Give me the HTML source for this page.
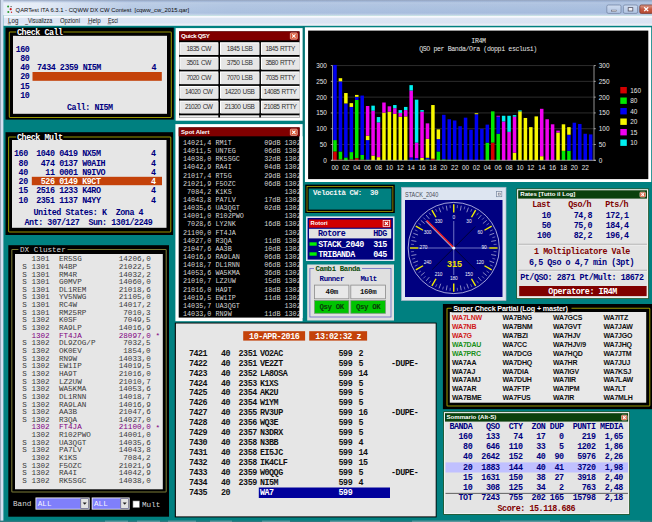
<!DOCTYPE html>
<html><head><meta charset="utf-8"><title>QARTest ITA 6.3.1 - CQWW DX CW Contest</title>
<style>
html,body{margin:0;padding:0;}
body{width:652px;height:522px;overflow:hidden;background:#008080;position:relative;font-family:"Liberation Sans",sans-serif;}
#app{position:absolute;left:0;top:0;width:652px;height:522px;overflow:hidden;background:#008080;}
#app div{position:absolute;white-space:pre;}
#app svg{position:absolute;left:0;top:0;}
.tb,.tw,.tk,.tr{font:bold 8.4px/10px "Liberation Mono",monospace;letter-spacing:-0.46px;}
.tb{color:#000080;}.tw{color:#fff;}.tk{color:#101010;}.tr{color:#800000;}
.dx{font:7.63px/10px "Liberation Mono",monospace;color:#3a3a3a;}
.dxp{font:7.63px/10px "Liberation Mono",monospace;color:#800080;}
.sp{font:6.78px/10px "Liberation Mono",monospace;color:#d6d6d6;}
.t8{font:bold 7.4px/10px "Liberation Mono",monospace;letter-spacing:-0.37px;}
.sb{font:bold 6.1px/10px "Liberation Sans",sans-serif;color:#fff;}
.qb{font:6.5px/10px "Liberation Sans",sans-serif;color:#303030;letter-spacing:-0.5px;word-spacing:0.9px;}
.ch{font:6.6px/10px "Liberation Mono",monospace;color:#e8e8e8;letter-spacing:-0.39px;}
.cn{font:6.42px/10px "Liberation Sans",sans-serif;color:#e8e8e8;}
.scp{font:bold 7px/10px "Liberation Sans",sans-serif;color:#101010;letter-spacing:-0.2px;}
.mn{font:6.4px/10px "Liberation Sans",sans-serif;color:#202020;}

</style></head><body><div id="app">
<svg width="652" height="522" viewBox="0 0 652 522">
<defs><linearGradient id="gt" x1="0" y1="0" x2="1" y2="0"><stop offset="0" stop-color="#e9eff9"/><stop offset="0.06" stop-color="#e2eaf6"/><stop offset="0.12" stop-color="#cbd9ee"/><stop offset="0.2" stop-color="#b3c7e3"/><stop offset="0.35" stop-color="#aac0df"/><stop offset="1" stop-color="#a3badc"/></linearGradient><linearGradient id="gr" x1="0" y1="0" x2="0" y2="1"><stop offset="0" stop-color="#8f9db6" stop-opacity="0.9"/><stop offset="0.1" stop-color="#9fb2d2" stop-opacity="0.5"/><stop offset="0.25" stop-color="#fff" stop-opacity="0.12"/><stop offset="0.85" stop-color="#fff" stop-opacity="0"/><stop offset="1" stop-color="#fff" stop-opacity="0.35"/></linearGradient><linearGradient id="gm" x1="0" y1="0" x2="0" y2="1"><stop offset="0" stop-color="#fcfdfe"/><stop offset="0.2" stop-color="#f2f5fb"/><stop offset="0.3" stop-color="#dde5f3"/><stop offset="0.74" stop-color="#dae3f2"/><stop offset="0.82" stop-color="#e8ecf5"/><stop offset="1" stop-color="#eceff6"/></linearGradient><linearGradient id="gb" x1="0" y1="0" x2="0" y2="1"><stop offset="0" stop-color="#cfdcf0"/><stop offset="1" stop-color="#aec2e0"/></linearGradient><linearGradient id="gc" x1="0" y1="0" x2="0" y2="1"><stop offset="0" stop-color="#dda090"/><stop offset="0.5" stop-color="#c65a42"/><stop offset="1" stop-color="#b84a32"/></linearGradient></defs>
<rect x="0.00" y="0.00" width="652.00" height="15.30" fill="url(#gt)" />
<rect x="0.00" y="0.00" width="652.00" height="15.30" fill="url(#gr)" />
<rect x="3.40" y="15.30" width="648.60" height="10.50" fill="url(#gm)" />
<rect x="0.00" y="0.00" width="3.40" height="522.00" fill="#d3deef" />
<rect x="0.00" y="0.00" width="0.80" height="522.00" fill="#8c98ac" />
<rect x="0.00" y="520.60" width="652.00" height="1.40" fill="#2f7a80" />
<rect x="105.00" y="520.60" width="23.00" height="1.40" fill="#5d979d" />
<rect x="137.00" y="520.60" width="23.00" height="1.40" fill="#5d979d" />
<rect x="168.00" y="520.60" width="28.00" height="1.40" fill="#5d979d" />
<rect x="210.00" y="520.60" width="22.00" height="1.40" fill="#5d979d" />
<rect x="262.00" y="520.60" width="28.00" height="1.40" fill="#5d979d" />
<rect x="330.00" y="520.60" width="50.00" height="1.40" fill="#5d979d" />
<rect x="412.00" y="520.60" width="58.00" height="1.40" fill="#5d979d" />
<rect x="500.00" y="520.60" width="60.00" height="1.40" fill="#5d979d" />
<rect x="590.00" y="520.60" width="50.00" height="1.40" fill="#5d979d" />
<g transform="translate(6.5 5)"><circle cx="1.6" cy="1.4" r="1" fill="#2a9a2a"/><circle cx="4.2" cy="4.2" r="1.1" fill="#d02020"/><circle cx="1.8" cy="7" r="1" fill="#2a9a2a"/><circle cx="4.6" cy="1.6" r="0.7" fill="#555"/><circle cx="5" cy="7.2" r="0.7" fill="#d02020"/></g>
<rect x="7.70" y="23.60" width="3.20" height="0.60" fill="#404040" />
<rect x="87.50" y="23.60" width="4.20" height="0.60" fill="#404040" />
<rect x="107.50" y="23.60" width="3.80" height="0.60" fill="#404040" />
<rect x="606.80" y="5.00" width="14.20" height="8.40" fill="url(#gb)" stroke="#6f7f9e" stroke-width="0.7" rx="1.5"/>
<rect x="611.60" y="10.10" width="5.00" height="1.50" fill="#f4f4f4" stroke="#556" stroke-width="0.5" />
<rect x="623.40" y="5.00" width="14.20" height="8.40" fill="url(#gb)" stroke="#6f7f9e" stroke-width="0.7" rx="1.5"/>
<rect x="628.20" y="7.60" width="4.60" height="3.40" fill="#f0f0f4" stroke="#556" stroke-width="0.8" />
<rect x="639.80" y="5.00" width="13.20" height="8.40" fill="url(#gc)" stroke="#7a3a30" stroke-width="0.8" rx="1.5"/>
<path d="M644.2 7.3L648.2 11.1M648.2 7.3L644.2 11.1" stroke="#fff" stroke-width="1.3" fill="none"/>
<rect x="5.50" y="27.60" width="168.30" height="92.00" fill="#000" />
<rect x="9.30" y="31.90" width="162.00" height="85.50" fill="none" stroke="#969600" stroke-width="1.05" rx="0.8"/>
<rect x="13.00" y="35.80" width="154.00" height="78.00" fill="#e6e6e6" />
<rect x="16.20" y="28.20" width="47.20" height="7.20" fill="#000" />
<rect x="32.50" y="72.00" width="129.30" height="8.80" fill="#c4420a" />
<rect x="5.50" y="132.20" width="167.60" height="102.80" fill="#000" />
<rect x="8.60" y="137.00" width="162.20" height="94.90" fill="none" stroke="#969600" stroke-width="1.05" rx="0.8"/>
<rect x="12.00" y="140.00" width="154.50" height="87.80" fill="#e6e6e6" />
<rect x="16.20" y="133.00" width="47.20" height="7.00" fill="#000" />
<rect x="31.80" y="176.80" width="130.20" height="8.40" fill="#c4420a" />
<rect x="8.30" y="245.20" width="160.70" height="271.50" fill="#000" />
<rect x="11.80" y="249.50" width="154.40" height="242.50" fill="none" stroke="#7d7d36" stroke-width="1.05" rx="0.8"/>
<rect x="15.00" y="254.00" width="147.80" height="235.30" fill="#e6e6e6" />
<rect x="18.40" y="246.00" width="49.10" height="7.80" fill="#000" />
<rect x="35.50" y="497.50" width="54.10" height="12.10" fill="#fff" />
<rect x="36.30" y="498.30" width="52.50" height="10.50" fill="#7f7ffb" />
<rect x="80.80" y="498.70" width="7.70" height="9.70" fill="#e4e4e4" stroke="#666" stroke-width="0.6" />
<path d="M82.70 502.40h4l-2 2.4z" fill="#222"/>
<rect x="91.70" y="497.50" width="37.90" height="12.10" fill="#fff" />
<rect x="92.50" y="498.30" width="36.30" height="10.50" fill="#7f7ffb" />
<rect x="120.80" y="498.70" width="7.70" height="9.70" fill="#e4e4e4" stroke="#666" stroke-width="0.6" />
<path d="M122.70 502.40h4l-2 2.4z" fill="#222"/>
<rect x="133.00" y="501.00" width="6.30" height="6.40" fill="#fff" stroke="#999" stroke-width="0.6" />
<rect x="175.60" y="28.10" width="127.00" height="92.60" fill="#fff" />
<rect x="179.00" y="31.40" width="120.60" height="86.20" fill="#000" />
<rect x="179.00" y="31.40" width="120.30" height="9.00" fill="#800000" />
<rect x="290.35" y="32.95" width="6.90" height="6.20" fill="#d8502c" stroke="#f4d0c4" stroke-width="0.7" rx="0.8"/>
<path d="M292.14 34.39L295.46 37.71M295.46 34.39L292.14 37.71" stroke="#fff" stroke-width="1.15" fill="none"/>
<rect x="179.30" y="42.20" width="39.00" height="12.70" fill="#fff" />
<rect x="180.40" y="43.40" width="37.90" height="11.50" fill="#e6e6e6" />
<rect x="220.00" y="42.20" width="39.30" height="12.70" fill="#fff" />
<rect x="221.10" y="43.40" width="38.20" height="11.50" fill="#e6e6e6" />
<rect x="260.90" y="42.20" width="38.70" height="12.70" fill="#fff" />
<rect x="262.00" y="43.40" width="37.60" height="11.50" fill="#e6e6e6" />
<rect x="179.30" y="56.80" width="39.00" height="12.70" fill="#fff" />
<rect x="180.40" y="58.00" width="37.90" height="11.50" fill="#e6e6e6" />
<rect x="220.00" y="56.80" width="39.30" height="12.70" fill="#fff" />
<rect x="221.10" y="58.00" width="38.20" height="11.50" fill="#e6e6e6" />
<rect x="260.90" y="56.80" width="38.70" height="12.70" fill="#fff" />
<rect x="262.00" y="58.00" width="37.60" height="11.50" fill="#e6e6e6" />
<rect x="179.30" y="71.40" width="39.00" height="12.70" fill="#fff" />
<rect x="180.40" y="72.60" width="37.90" height="11.50" fill="#e6e6e6" />
<rect x="220.00" y="71.40" width="39.30" height="12.70" fill="#fff" />
<rect x="221.10" y="72.60" width="38.20" height="11.50" fill="#e6e6e6" />
<rect x="260.90" y="71.40" width="38.70" height="12.70" fill="#fff" />
<rect x="262.00" y="72.60" width="37.60" height="11.50" fill="#e6e6e6" />
<rect x="179.30" y="85.90" width="39.00" height="12.70" fill="#fff" />
<rect x="180.40" y="87.10" width="37.90" height="11.50" fill="#e6e6e6" />
<rect x="220.00" y="85.90" width="39.30" height="12.70" fill="#fff" />
<rect x="221.10" y="87.10" width="38.20" height="11.50" fill="#e6e6e6" />
<rect x="260.90" y="85.90" width="38.70" height="12.70" fill="#fff" />
<rect x="262.00" y="87.10" width="37.60" height="11.50" fill="#e6e6e6" />
<rect x="179.30" y="100.60" width="39.00" height="12.70" fill="#fff" />
<rect x="180.40" y="101.80" width="37.90" height="11.50" fill="#e6e6e6" />
<rect x="220.00" y="100.60" width="39.30" height="12.70" fill="#fff" />
<rect x="221.10" y="101.80" width="38.20" height="11.50" fill="#e6e6e6" />
<rect x="260.90" y="100.60" width="38.70" height="12.70" fill="#fff" />
<rect x="262.00" y="101.80" width="37.60" height="11.50" fill="#e6e6e6" />
<rect x="179.30" y="115.30" width="39.00" height="2.30" fill="#f0f0f0" />
<rect x="220.00" y="115.30" width="39.30" height="2.30" fill="#f0f0f0" />
<rect x="260.90" y="115.30" width="38.70" height="2.30" fill="#f0f0f0" />
<rect x="175.40" y="124.10" width="127.20" height="197.10" fill="#fff" />
<rect x="178.70" y="127.40" width="120.90" height="190.20" fill="#000" />
<rect x="178.70" y="127.40" width="120.90" height="8.90" fill="#800000" />
<rect x="290.35" y="129.15" width="6.90" height="6.20" fill="#d8502c" stroke="#f4d0c4" stroke-width="0.7" rx="0.8"/>
<path d="M292.14 130.59L295.46 133.91M295.46 130.59L292.14 133.91" stroke="#fff" stroke-width="1.15" fill="none"/>
<rect x="304.90" y="27.30" width="346.30" height="154.70" fill="#fff" />
<rect x="308.10" y="30.60" width="340.20" height="148.50" fill="#000" />
<rect x="303.30" y="26.00" width="1.00" height="160.00" fill="#0a6c6c" />
<rect x="299.00" y="121.60" width="5.00" height="1.00" fill="#0a6c6c" />
<line x1="332.5" y1="144.51" x2="594" y2="144.51" stroke="#4a4a4a" stroke-width="0.6"/><line x1="332.5" y1="128.72" x2="594" y2="128.72" stroke="#4a4a4a" stroke-width="0.6"/><line x1="332.5" y1="112.93" x2="594" y2="112.93" stroke="#4a4a4a" stroke-width="0.6"/><line x1="332.5" y1="97.14" x2="594" y2="97.14" stroke="#4a4a4a" stroke-width="0.6"/><line x1="332.5" y1="81.35" x2="594" y2="81.35" stroke="#4a4a4a" stroke-width="0.6"/><line x1="332.5" y1="65.56" x2="594" y2="65.56" stroke="#4a4a4a" stroke-width="0.6"/><rect x="333.25" y="151.46" width="3.5" height="8.84" fill="#d40000"/><rect x="333.25" y="140.09" width="3.5" height="11.37" fill="#00e800"/><rect x="333.25" y="64.93" width="3.5" height="75.16" fill="#0000f0"/><rect x="338.69" y="159.35" width="3.5" height="0.95" fill="#d40000"/><rect x="338.69" y="151.46" width="3.5" height="7.90" fill="#00e800"/><rect x="338.69" y="81.35" width="3.5" height="70.11" fill="#0000f0"/><rect x="338.69" y="78.19" width="3.5" height="3.16" fill="#f8f800"/><rect x="344.13" y="157.46" width="3.5" height="2.84" fill="#00e800"/><rect x="344.13" y="103.46" width="3.5" height="54.00" fill="#0000f0"/><rect x="344.13" y="93.03" width="3.5" height="10.42" fill="#f8f800"/><rect x="349.57" y="159.35" width="3.5" height="0.95" fill="#d40000"/><rect x="349.57" y="152.09" width="3.5" height="7.26" fill="#00e800"/><rect x="349.57" y="106.93" width="3.5" height="45.16" fill="#0000f0"/><rect x="349.57" y="103.14" width="3.5" height="3.79" fill="#f8f800"/><rect x="355.01" y="158.09" width="3.5" height="2.21" fill="#d40000"/><rect x="355.01" y="99.98" width="3.5" height="58.11" fill="#00e800"/><rect x="355.01" y="96.82" width="3.5" height="3.16" fill="#0000f0"/><rect x="355.01" y="94.93" width="3.5" height="1.89" fill="#f8f800"/><rect x="360.45" y="159.67" width="3.5" height="0.63" fill="#d40000"/><rect x="360.45" y="154.93" width="3.5" height="4.74" fill="#00e800"/><rect x="360.45" y="95.56" width="3.5" height="59.37" fill="#0000f0"/><rect x="365.89" y="159.67" width="3.5" height="0.63" fill="#00e800"/><rect x="365.89" y="140.09" width="3.5" height="19.58" fill="#0000f0"/><rect x="365.89" y="135.67" width="3.5" height="4.42" fill="#f8f800"/><rect x="365.89" y="105.98" width="3.5" height="29.69" fill="#f000f0"/><rect x="371.33" y="155.56" width="3.5" height="4.74" fill="#f8f800"/><rect x="371.33" y="110.72" width="3.5" height="44.84" fill="#f000f0"/><rect x="371.33" y="105.67" width="3.5" height="5.05" fill="#00f0f0"/><rect x="376.77" y="157.14" width="3.5" height="3.16" fill="#f8f800"/><rect x="376.77" y="122.40" width="3.5" height="34.74" fill="#f000f0"/><rect x="376.77" y="117.04" width="3.5" height="5.37" fill="#00f0f0"/><rect x="382.21" y="112.61" width="3.5" height="47.69" fill="#f8f800"/><rect x="382.21" y="102.51" width="3.5" height="10.11" fill="#f000f0"/><rect x="387.65" y="111.67" width="3.5" height="48.63" fill="#f8f800"/><rect x="387.65" y="106.30" width="3.5" height="5.37" fill="#f000f0"/><rect x="393.09" y="113.88" width="3.5" height="46.42" fill="#f8f800"/><rect x="393.09" y="108.19" width="3.5" height="5.68" fill="#f000f0"/><rect x="393.09" y="105.03" width="3.5" height="3.16" fill="#00f0f0"/><rect x="398.53" y="116.72" width="3.5" height="43.58" fill="#f8f800"/><rect x="398.53" y="112.93" width="3.5" height="3.79" fill="#f000f0"/><rect x="398.53" y="110.09" width="3.5" height="2.84" fill="#00f0f0"/><rect x="403.97" y="116.40" width="3.5" height="43.90" fill="#f8f800"/><rect x="403.97" y="110.09" width="3.5" height="6.32" fill="#f000f0"/><rect x="403.97" y="106.93" width="3.5" height="3.16" fill="#00f0f0"/><rect x="409.41" y="157.46" width="3.5" height="2.84" fill="#0000f0"/><rect x="409.41" y="90.51" width="3.5" height="66.95" fill="#f000f0"/><rect x="409.41" y="85.14" width="3.5" height="5.37" fill="#00f0f0"/><rect x="414.85" y="158.09" width="3.5" height="2.21" fill="#0000f0"/><rect x="414.85" y="142.62" width="3.5" height="15.47" fill="#f000f0"/><rect x="414.85" y="99.67" width="3.5" height="42.95" fill="#00f0f0"/><rect x="420.29" y="157.77" width="3.5" height="2.53" fill="#f8f800"/><rect x="420.29" y="111.67" width="3.5" height="46.11" fill="#f000f0"/><rect x="420.29" y="110.09" width="3.5" height="1.58" fill="#00f0f0"/><rect x="425.73" y="159.35" width="3.5" height="0.95" fill="#00e800"/><rect x="425.73" y="157.77" width="3.5" height="1.58" fill="#0000f0"/><rect x="425.73" y="138.83" width="3.5" height="18.95" fill="#f8f800"/><rect x="425.73" y="123.35" width="3.5" height="15.47" fill="#f000f0"/><rect x="431.17" y="158.72" width="3.5" height="1.58" fill="#d40000"/><rect x="431.17" y="105.03" width="3.5" height="53.69" fill="#f8f800"/><rect x="436.61" y="151.46" width="3.5" height="8.84" fill="#00e800"/><rect x="436.61" y="139.14" width="3.5" height="12.32" fill="#0000f0"/><rect x="436.61" y="129.35" width="3.5" height="9.79" fill="#f8f800"/><rect x="442.05" y="159.35" width="3.5" height="0.95" fill="#00e800"/><rect x="442.05" y="114.82" width="3.5" height="44.53" fill="#0000f0"/><rect x="447.49" y="159.67" width="3.5" height="0.63" fill="#00e800"/><rect x="447.49" y="119.25" width="3.5" height="40.42" fill="#0000f0"/><rect x="452.93" y="159.67" width="3.5" height="0.63" fill="#00e800"/><rect x="452.93" y="120.51" width="3.5" height="39.16" fill="#0000f0"/><rect x="458.37" y="159.98" width="3.5" height="0.32" fill="#00e800"/><rect x="458.37" y="126.19" width="3.5" height="33.79" fill="#0000f0"/><rect x="463.81" y="117.67" width="3.5" height="42.63" fill="#0000f0"/><rect x="469.25" y="129.67" width="3.5" height="30.63" fill="#0000f0"/><rect x="474.69" y="114.19" width="3.5" height="46.11" fill="#0000f0"/><rect x="474.69" y="113.25" width="3.5" height="0.95" fill="#f8f800"/><rect x="480.13" y="128.72" width="3.5" height="31.58" fill="#0000f0"/><rect x="485.57" y="142.62" width="3.5" height="17.68" fill="#00e800"/><rect x="485.57" y="124.61" width="3.5" height="18.00" fill="#0000f0"/><rect x="491.01" y="142.62" width="3.5" height="17.68" fill="#d40000"/><rect x="491.01" y="111.35" width="3.5" height="31.26" fill="#00e800"/><rect x="496.45" y="133.77" width="3.5" height="26.53" fill="#00e800"/><rect x="496.45" y="116.72" width="3.5" height="17.05" fill="#0000f0"/><rect x="496.45" y="115.77" width="3.5" height="0.95" fill="#f000f0"/><rect x="501.89" y="121.46" width="3.5" height="38.84" fill="#f000f0"/><rect x="501.89" y="115.77" width="3.5" height="5.68" fill="#00f0f0"/><rect x="507.33" y="131.88" width="3.5" height="28.42" fill="#f000f0"/><rect x="507.33" y="115.77" width="3.5" height="16.11" fill="#00f0f0"/><rect x="512.77" y="152.72" width="3.5" height="7.58" fill="#f8f800"/><rect x="512.77" y="116.72" width="3.5" height="36.00" fill="#f000f0"/><rect x="512.77" y="115.14" width="3.5" height="1.58" fill="#00f0f0"/><rect x="518.21" y="111.35" width="3.5" height="48.95" fill="#f8f800"/><rect x="518.21" y="110.40" width="3.5" height="0.95" fill="#00f0f0"/><rect x="523.65" y="117.98" width="3.5" height="42.32" fill="#f8f800"/><rect x="529.09" y="127.14" width="3.5" height="33.16" fill="#f8f800"/><rect x="534.53" y="116.40" width="3.5" height="43.90" fill="#f8f800"/><rect x="539.97" y="156.19" width="3.5" height="4.11" fill="#f8f800"/><rect x="539.97" y="108.82" width="3.5" height="47.37" fill="#f000f0"/><rect x="545.41" y="119.25" width="3.5" height="41.05" fill="#f000f0"/><rect x="550.85" y="124.30" width="3.5" height="36.00" fill="#f000f0"/><rect x="556.29" y="132.51" width="3.5" height="27.79" fill="#f8f800"/><rect x="556.29" y="130.61" width="3.5" height="1.89" fill="#f000f0"/><rect x="561.73" y="150.83" width="3.5" height="9.47" fill="#00e800"/><rect x="561.73" y="124.30" width="3.5" height="26.53" fill="#f8f800"/><rect x="567.17" y="150.83" width="3.5" height="9.47" fill="#00e800"/><rect x="567.17" y="134.72" width="3.5" height="16.11" fill="#0000f0"/><rect x="567.17" y="127.14" width="3.5" height="7.58" fill="#f8f800"/><rect x="572.61" y="122.72" width="3.5" height="37.58" fill="#0000f0"/><rect x="578.05" y="123.98" width="3.5" height="36.32" fill="#0000f0"/><rect x="583.49" y="133.77" width="3.5" height="26.53" fill="#0000f0"/><rect x="588.93" y="134.40" width="3.5" height="25.90" fill="#0000f0"/><line x1="332.5" y1="65.56" x2="332.5" y2="160.60" stroke="#d0d0d0" stroke-width="0.7"/><line x1="594" y1="65.56" x2="594" y2="160.60" stroke="#d0d0d0" stroke-width="0.7"/><line x1="331" y1="160.30" x2="596" y2="160.30" stroke="#d0d0d0" stroke-width="0.7"/><line x1="330.8" y1="160.30" x2="332.5" y2="160.30" stroke="#d0d0d0" stroke-width="0.7"/><line x1="594" y1="160.30" x2="595.8" y2="160.30" stroke="#d0d0d0" stroke-width="0.7"/><line x1="330.8" y1="144.51" x2="332.5" y2="144.51" stroke="#d0d0d0" stroke-width="0.7"/><line x1="594" y1="144.51" x2="595.8" y2="144.51" stroke="#d0d0d0" stroke-width="0.7"/><line x1="330.8" y1="128.72" x2="332.5" y2="128.72" stroke="#d0d0d0" stroke-width="0.7"/><line x1="594" y1="128.72" x2="595.8" y2="128.72" stroke="#d0d0d0" stroke-width="0.7"/><line x1="330.8" y1="112.93" x2="332.5" y2="112.93" stroke="#d0d0d0" stroke-width="0.7"/><line x1="594" y1="112.93" x2="595.8" y2="112.93" stroke="#d0d0d0" stroke-width="0.7"/><line x1="330.8" y1="97.14" x2="332.5" y2="97.14" stroke="#d0d0d0" stroke-width="0.7"/><line x1="594" y1="97.14" x2="595.8" y2="97.14" stroke="#d0d0d0" stroke-width="0.7"/><line x1="330.8" y1="81.35" x2="332.5" y2="81.35" stroke="#d0d0d0" stroke-width="0.7"/><line x1="594" y1="81.35" x2="595.8" y2="81.35" stroke="#d0d0d0" stroke-width="0.7"/><line x1="330.8" y1="65.56" x2="332.5" y2="65.56" stroke="#d0d0d0" stroke-width="0.7"/><line x1="594" y1="65.56" x2="595.8" y2="65.56" stroke="#d0d0d0" stroke-width="0.7"/><rect x="620.3" y="87.00" width="6.5" height="6.4" fill="#d40000"/><rect x="620.3" y="97.50" width="6.5" height="6.4" fill="#00e800"/><rect x="620.3" y="108.00" width="6.5" height="6.4" fill="#0000f0"/><rect x="620.3" y="118.50" width="6.5" height="6.4" fill="#f8f800"/><rect x="620.3" y="129.00" width="6.5" height="6.4" fill="#f000f0"/><rect x="620.3" y="139.50" width="6.5" height="6.4" fill="#00f0f0"/>
<rect x="305.20" y="184.60" width="89.60" height="28.40" fill="#000" />
<rect x="307.00" y="186.50" width="85.90" height="24.90" fill="none" stroke="#b0a800" stroke-width="0.75" />
<rect x="308.70" y="188.50" width="82.70" height="21.10" fill="#008080" />
<rect x="306.00" y="216.40" width="88.50" height="44.60" fill="#dfe4f2" />
<rect x="307.60" y="218.00" width="85.30" height="41.60" fill="#000080" />
<rect x="309.00" y="219.50" width="82.20" height="8.20" fill="#d00000" />
<rect x="383.10" y="220.40" width="6.60" height="6.00" fill="#c81010" stroke="#fff" stroke-width="0.7" />
<path d="M384.8 221.8L388 225M388 221.8L384.8 225" stroke="#fff" stroke-width="1.1" fill="none"/>
<rect x="309.00" y="228.80" width="82.20" height="9.60" fill="#e2e2e2" />
<rect x="309.50" y="242.30" width="7.20" height="3.40" fill="#00f000" />
<rect x="309.50" y="252.30" width="7.20" height="3.40" fill="#00f000" />
<rect x="307.20" y="264.50" width="86.80" height="56.00" fill="#e0e0e0" />
<rect x="309.90" y="268.40" width="81.10" height="48.60" fill="none" stroke="#6868c0" stroke-width="0.8" />
<rect x="314.00" y="265.00" width="48.00" height="7.00" fill="#e0e0e0" />
<rect x="314.50" y="285.10" width="34.40" height="13.70" fill="#e8e8e8" stroke="#8a8a8a" stroke-width="0.8" />
<rect x="314.50" y="300.50" width="34.40" height="12.80" fill="#00c400" stroke="#7a9a7a" stroke-width="0.8" />
<rect x="350.80" y="285.10" width="34.60" height="13.70" fill="#e8e8e8" stroke="#8a8a8a" stroke-width="0.8" />
<rect x="350.80" y="300.50" width="34.60" height="12.80" fill="#00c400" stroke="#7a9a7a" stroke-width="0.8" />
<rect x="401.50" y="187.30" width="104.50" height="113.20" fill="#dde5f1" stroke="#aab6c8" stroke-width="0.7" />
<rect x="496.60" y="191.50" width="5.20" height="5.20" fill="#eef2f8" stroke="#7888a0" stroke-width="0.7" />
<rect x="498.20" y="193.10" width="2.00" height="2.00" fill="none" stroke="#667" stroke-width="0.6" />
<rect x="405.00" y="200.00" width="97.50" height="97.00" fill="#000080" />
<circle cx="453.75" cy="248.0" r="45.6" fill="none" stroke="#e8e8ff" stroke-width="0.7"/><line x1="453.75" y1="212.50" x2="453.75" y2="204.20" stroke="#f4f000" stroke-width="1.4"/><line x1="457.24" y1="208.15" x2="457.50" y2="205.16" stroke="#c8c8e8" stroke-width="0.5"/><line x1="460.35" y1="210.58" x2="461.22" y2="205.65" stroke="#e0e0f0" stroke-width="0.6"/><line x1="464.10" y1="209.36" x2="464.88" y2="206.47" stroke="#c8c8e8" stroke-width="0.5"/><line x1="466.75" y1="212.29" x2="468.46" y2="207.59" stroke="#e0e0f0" stroke-width="0.6"/><line x1="470.65" y1="211.75" x2="471.92" y2="209.03" stroke="#c8c8e8" stroke-width="0.5"/><line x1="471.50" y1="217.26" x2="475.65" y2="210.07" stroke="#f4f000" stroke-width="1.4"/><line x1="476.69" y1="215.23" x2="478.41" y2="212.78" stroke="#c8c8e8" stroke-width="0.5"/><line x1="478.18" y1="218.89" x2="481.39" y2="215.06" stroke="#e0e0f0" stroke-width="0.6"/><line x1="482.03" y1="219.72" x2="484.16" y2="217.59" stroke="#c8c8e8" stroke-width="0.5"/><line x1="482.86" y1="223.57" x2="486.69" y2="220.36" stroke="#e0e0f0" stroke-width="0.6"/><line x1="486.52" y1="225.06" x2="488.97" y2="223.34" stroke="#c8c8e8" stroke-width="0.5"/><line x1="484.49" y1="230.25" x2="491.68" y2="226.10" stroke="#f4f000" stroke-width="1.4"/><line x1="490.00" y1="231.10" x2="492.72" y2="229.83" stroke="#c8c8e8" stroke-width="0.5"/><line x1="489.46" y1="235.00" x2="494.16" y2="233.29" stroke="#e0e0f0" stroke-width="0.6"/><line x1="492.39" y1="237.65" x2="495.28" y2="236.87" stroke="#c8c8e8" stroke-width="0.5"/><line x1="491.17" y1="241.40" x2="496.10" y2="240.53" stroke="#e0e0f0" stroke-width="0.6"/><line x1="493.60" y1="244.51" x2="496.59" y2="244.25" stroke="#c8c8e8" stroke-width="0.5"/><line x1="489.25" y1="248.00" x2="497.55" y2="248.00" stroke="#f4f000" stroke-width="1.4"/><line x1="493.60" y1="251.49" x2="496.59" y2="251.75" stroke="#c8c8e8" stroke-width="0.5"/><line x1="491.17" y1="254.60" x2="496.10" y2="255.47" stroke="#e0e0f0" stroke-width="0.6"/><line x1="492.39" y1="258.35" x2="495.28" y2="259.13" stroke="#c8c8e8" stroke-width="0.5"/><line x1="489.46" y1="261.00" x2="494.16" y2="262.71" stroke="#e0e0f0" stroke-width="0.6"/><line x1="490.00" y1="264.90" x2="492.72" y2="266.17" stroke="#c8c8e8" stroke-width="0.5"/><line x1="484.49" y1="265.75" x2="491.68" y2="269.90" stroke="#f4f000" stroke-width="1.4"/><line x1="486.52" y1="270.94" x2="488.97" y2="272.66" stroke="#c8c8e8" stroke-width="0.5"/><line x1="482.86" y1="272.43" x2="486.69" y2="275.64" stroke="#e0e0f0" stroke-width="0.6"/><line x1="482.03" y1="276.28" x2="484.16" y2="278.41" stroke="#c8c8e8" stroke-width="0.5"/><line x1="478.18" y1="277.11" x2="481.39" y2="280.94" stroke="#e0e0f0" stroke-width="0.6"/><line x1="476.69" y1="280.77" x2="478.41" y2="283.22" stroke="#c8c8e8" stroke-width="0.5"/><line x1="471.50" y1="278.74" x2="475.65" y2="285.93" stroke="#f4f000" stroke-width="1.4"/><line x1="470.65" y1="284.25" x2="471.92" y2="286.97" stroke="#c8c8e8" stroke-width="0.5"/><line x1="466.75" y1="283.71" x2="468.46" y2="288.41" stroke="#e0e0f0" stroke-width="0.6"/><line x1="464.10" y1="286.64" x2="464.88" y2="289.53" stroke="#c8c8e8" stroke-width="0.5"/><line x1="460.35" y1="285.42" x2="461.22" y2="290.35" stroke="#e0e0f0" stroke-width="0.6"/><line x1="457.24" y1="287.85" x2="457.50" y2="290.84" stroke="#c8c8e8" stroke-width="0.5"/><line x1="453.75" y1="283.50" x2="453.75" y2="291.80" stroke="#f4f000" stroke-width="1.4"/><line x1="450.26" y1="287.85" x2="450.00" y2="290.84" stroke="#c8c8e8" stroke-width="0.5"/><line x1="447.15" y1="285.42" x2="446.28" y2="290.35" stroke="#e0e0f0" stroke-width="0.6"/><line x1="443.40" y1="286.64" x2="442.62" y2="289.53" stroke="#c8c8e8" stroke-width="0.5"/><line x1="440.75" y1="283.71" x2="439.04" y2="288.41" stroke="#e0e0f0" stroke-width="0.6"/><line x1="436.85" y1="284.25" x2="435.58" y2="286.97" stroke="#c8c8e8" stroke-width="0.5"/><line x1="436.00" y1="278.74" x2="431.85" y2="285.93" stroke="#f4f000" stroke-width="1.4"/><line x1="430.81" y1="280.77" x2="429.09" y2="283.22" stroke="#c8c8e8" stroke-width="0.5"/><line x1="429.32" y1="277.11" x2="426.11" y2="280.94" stroke="#e0e0f0" stroke-width="0.6"/><line x1="425.47" y1="276.28" x2="423.34" y2="278.41" stroke="#c8c8e8" stroke-width="0.5"/><line x1="424.64" y1="272.43" x2="420.81" y2="275.64" stroke="#e0e0f0" stroke-width="0.6"/><line x1="420.98" y1="270.94" x2="418.53" y2="272.66" stroke="#c8c8e8" stroke-width="0.5"/><line x1="423.01" y1="265.75" x2="415.82" y2="269.90" stroke="#f4f000" stroke-width="1.4"/><line x1="417.50" y1="264.90" x2="414.78" y2="266.17" stroke="#c8c8e8" stroke-width="0.5"/><line x1="418.04" y1="261.00" x2="413.34" y2="262.71" stroke="#e0e0f0" stroke-width="0.6"/><line x1="415.11" y1="258.35" x2="412.22" y2="259.13" stroke="#c8c8e8" stroke-width="0.5"/><line x1="416.33" y1="254.60" x2="411.40" y2="255.47" stroke="#e0e0f0" stroke-width="0.6"/><line x1="413.90" y1="251.49" x2="410.91" y2="251.75" stroke="#c8c8e8" stroke-width="0.5"/><line x1="418.25" y1="248.00" x2="409.95" y2="248.00" stroke="#f4f000" stroke-width="1.4"/><line x1="413.90" y1="244.51" x2="410.91" y2="244.25" stroke="#c8c8e8" stroke-width="0.5"/><line x1="416.33" y1="241.40" x2="411.40" y2="240.53" stroke="#e0e0f0" stroke-width="0.6"/><line x1="415.11" y1="237.65" x2="412.22" y2="236.87" stroke="#c8c8e8" stroke-width="0.5"/><line x1="418.04" y1="235.00" x2="413.34" y2="233.29" stroke="#e0e0f0" stroke-width="0.6"/><line x1="417.50" y1="231.10" x2="414.78" y2="229.83" stroke="#c8c8e8" stroke-width="0.5"/><line x1="423.01" y1="230.25" x2="415.82" y2="226.10" stroke="#f4f000" stroke-width="1.4"/><line x1="420.98" y1="225.06" x2="418.53" y2="223.34" stroke="#c8c8e8" stroke-width="0.5"/><line x1="424.64" y1="223.57" x2="420.81" y2="220.36" stroke="#e0e0f0" stroke-width="0.6"/><line x1="425.47" y1="219.72" x2="423.34" y2="217.59" stroke="#c8c8e8" stroke-width="0.5"/><line x1="429.32" y1="218.89" x2="426.11" y2="215.06" stroke="#e0e0f0" stroke-width="0.6"/><line x1="430.81" y1="215.23" x2="429.09" y2="212.78" stroke="#c8c8e8" stroke-width="0.5"/><line x1="436.00" y1="217.26" x2="431.85" y2="210.07" stroke="#f4f000" stroke-width="1.4"/><line x1="436.85" y1="211.75" x2="435.58" y2="209.03" stroke="#c8c8e8" stroke-width="0.5"/><line x1="440.75" y1="212.29" x2="439.04" y2="207.59" stroke="#e0e0f0" stroke-width="0.6"/><line x1="443.40" y1="209.36" x2="442.62" y2="206.47" stroke="#c8c8e8" stroke-width="0.5"/><line x1="447.15" y1="210.58" x2="446.28" y2="205.65" stroke="#e0e0f0" stroke-width="0.6"/><line x1="450.26" y1="208.15" x2="450.00" y2="205.16" stroke="#c8c8e8" stroke-width="0.5"/><line x1="418.25" y1="248.0" x2="489.25" y2="248.0" stroke="#b8c0f0" stroke-width="0.6"/><line x1="453.75" y1="221.0" x2="453.75" y2="275.0" stroke="#b8c0f0" stroke-width="0.6"/><line x1="453.75" y1="248.0" x2="475.32" y2="226.43" stroke="#000" stroke-width="0.6"/><line x1="453.75" y1="248.0" x2="475.32" y2="269.57" stroke="#000" stroke-width="0.6"/><line x1="453.75" y1="248.0" x2="432.18" y2="269.57" stroke="#000" stroke-width="0.6"/><line x1="453.2" y1="248.55" x2="425.83" y2="221.18" stroke="#f4f4f4" stroke-width="1.0"/><line x1="454.05" y1="247.7" x2="426.68" y2="220.33" stroke="#ff2020" stroke-width="1.3"/><circle cx="453.75" cy="248.0" r="1.6" fill="#e8f0ff"/>
<rect x="516.30" y="188.40" width="132.60" height="110.50" fill="#2a562a" />
<rect x="517.10" y="189.20" width="131.00" height="108.90" fill="#f4f4f4" />
<rect x="517.90" y="190.00" width="129.40" height="107.30" fill="#e4e4e4" />
<rect x="518.20" y="190.30" width="128.80" height="8.30" fill="#0a400c" />
<rect x="639.95" y="192.15" width="5.50" height="4.90" fill="#d8502c" stroke="#f4d0c4" stroke-width="0.7" rx="0.8"/>
<path d="M641.36 193.26L644.04 195.94M644.04 193.26L641.36 195.94" stroke="#fff" stroke-width="1.15" fill="none"/>
<rect x="518.60" y="243.90" width="128.40" height="0.70" fill="#707070" />
<rect x="518.60" y="244.60" width="128.40" height="0.70" fill="#fff" />
<rect x="518.60" y="269.90" width="128.40" height="0.70" fill="#707070" />
<rect x="518.60" y="270.60" width="128.40" height="0.70" fill="#fff" />
<rect x="519.20" y="286.00" width="127.40" height="10.10" fill="#800000" />
<rect x="442.90" y="304.00" width="209.60" height="105.20" fill="#000" />
<rect x="447.00" y="308.30" width="202.80" height="97.70" fill="none" stroke="#969600" stroke-width="1.05" rx="0.8"/>
<rect x="449.80" y="312.00" width="196.40" height="90.70" fill="#e8e8e8" />
<rect x="451.60" y="304.60" width="119.90" height="7.70" fill="#000" />
<rect x="443.20" y="411.30" width="186.70" height="103.50" fill="#2a562a" />
<rect x="444.00" y="412.10" width="185.10" height="101.90" fill="#f4f4f4" />
<rect x="444.80" y="412.90" width="183.50" height="100.30" fill="#e4e4e4" />
<rect x="445.00" y="413.20" width="183.10" height="8.40" fill="#0a400c" />
<rect x="621.55" y="415.15" width="5.50" height="4.90" fill="#d8502c" stroke="#f4d0c4" stroke-width="0.7" rx="0.8"/>
<path d="M622.96 416.26L625.64 418.94M625.64 416.26L622.96 418.94" stroke="#fff" stroke-width="1.15" fill="none"/>
<rect x="445.50" y="462.40" width="182.50" height="10.10" fill="#c0c0ff" />
<rect x="445.50" y="492.90" width="182.50" height="0.80" fill="#404040" />
<rect x="174.80" y="322.60" width="261.80" height="194.80" fill="#000" />
<rect x="175.90" y="323.50" width="259.80" height="192.90" fill="#e6e6e6" />
<rect x="243.20" y="331.20" width="61.90" height="9.40" fill="#c4420a" />
<rect x="309.20" y="331.20" width="57.90" height="9.40" fill="#c4420a" />
<rect x="258.80" y="487.50" width="131.20" height="10.50" fill="#00009c" />
</svg>
<div class="mn" style="left:15.60px;top:5.35px;font-size:5.85px;color:#0c0c0c;">QARTest ITA 6.3.1 - CQWW DX CW Contest  [cqww_cw_2015.qar]</div>
<div class="mn" style="left:7.70px;top:15.98px;color:#202020;transform:scaleX(0.97);transform-origin:0 50%;">Log</div>
<div class="mn" style="left:25.30px;top:15.98px;color:#202020;transform:scaleX(0.845);transform-origin:0 50%;">_Visualizza</div>
<div class="mn" style="left:59.50px;top:15.98px;color:#202020;transform:scaleX(0.92);transform-origin:0 50%;">Opzioni</div>
<div class="mn" style="left:87.50px;top:15.98px;color:#202020;transform:scaleX(0.96);transform-origin:0 50%;">Help</div>
<div class="mn" style="left:107.50px;top:15.98px;color:#202020;transform:scaleX(0.83);transform-origin:0 50%;">Esci</div>
<div class="tw" style="left:17.00px;top:28.36px;">Check Call</div>
<div class="tb" style="left:15.70px;top:44.86px;">160</div>
<div class="tb" style="left:15.70px;top:54.06px;"> 80</div>
<div class="tb" style="left:15.70px;top:63.26px;"> 40</div>
<div class="tb" style="left:15.70px;top:72.46px;"> 20</div>
<div class="tb" style="left:15.70px;top:81.66px;"> 15</div>
<div class="tb" style="left:15.70px;top:90.96px;"> 10</div>
<div class="tb" style="left:37.00px;top:63.26px;">7434 2359 NI5M</div>
<div class="tb" style="left:151.40px;top:63.26px;">4</div>
<div class="tb" style="left:67.00px;top:103.06px;">Call: NI5M</div>
<div class="tw" style="left:17.00px;top:132.86px;">Check Mult</div>
<div class="tb" style="left:14.00px;top:149.36px;">160</div>
<div class="tb" style="left:36.20px;top:149.36px;">1040</div>
<div class="tb" style="left:59.20px;top:149.36px;">0419</div>
<div class="tb" style="left:82.20px;top:149.36px;">NX5M</div>
<div class="tb" style="left:151.00px;top:149.36px;">4</div>
<div class="tb" style="left:14.00px;top:158.76px;"> 80</div>
<div class="tb" style="left:36.20px;top:158.76px;"> 474</div>
<div class="tb" style="left:59.20px;top:158.76px;">0137</div>
<div class="tb" style="left:82.20px;top:158.76px;">W0AIH</div>
<div class="tb" style="left:151.00px;top:158.76px;">4</div>
<div class="tb" style="left:14.00px;top:168.06px;"> 40</div>
<div class="tb" style="left:36.20px;top:168.06px;">  11</div>
<div class="tb" style="left:59.20px;top:168.06px;">0001</div>
<div class="tb" style="left:82.20px;top:168.06px;">N9IVO</div>
<div class="tb" style="left:151.00px;top:168.06px;">4</div>
<div class="tb" style="left:14.00px;top:177.16px;"> 20</div>
<div class="tw" style="left:36.20px;top:177.16px;"> 526</div>
<div class="tw" style="left:59.20px;top:177.16px;">0149</div>
<div class="tw" style="left:82.20px;top:177.16px;">K9CT</div>
<div class="tw" style="left:151.00px;top:177.16px;">4</div>
<div class="tb" style="left:14.00px;top:186.46px;"> 15</div>
<div class="tb" style="left:36.20px;top:186.46px;">2516</div>
<div class="tb" style="left:59.20px;top:186.46px;">1233</div>
<div class="tb" style="left:82.20px;top:186.46px;">K4RO</div>
<div class="tb" style="left:151.00px;top:186.46px;">4</div>
<div class="tb" style="left:14.00px;top:195.86px;"> 10</div>
<div class="tb" style="left:36.20px;top:195.86px;">2351</div>
<div class="tb" style="left:59.20px;top:195.86px;">1137</div>
<div class="tb" style="left:82.20px;top:195.86px;">N4YY</div>
<div class="tb" style="left:151.00px;top:195.86px;">4</div>
<div class="tb" style="left:33.50px;top:208.26px;">United States: K  Zona 4</div>
<div class="tb" style="left:24.50px;top:218.26px;">Ant: 307/127  Sun: 1301/2249</div>
<div class="dx" style="left:20.00px;top:245.16px;color:#d8d8d8;">DX Cluster</div>
<div class="dx" style="left:31.40px;top:254.21px;">1301</div>
<div class="dx" style="left:58.90px;top:254.21px;">ER5SG</div>
<div class="dx" style="right:501.30px;top:254.21px;">14206,0</div>
<div class="dx" style="left:22.20px;top:261.85px;">S</div>
<div class="dx" style="left:31.40px;top:261.85px;">1301</div>
<div class="dx" style="left:58.90px;top:261.85px;">N4BP</div>
<div class="dx" style="right:501.30px;top:261.85px;">21022,5</div>
<div class="dx" style="left:22.20px;top:269.50px;">S</div>
<div class="dx" style="left:31.40px;top:269.50px;">1301</div>
<div class="dx" style="left:58.90px;top:269.50px;">RM4R</div>
<div class="dx" style="right:501.30px;top:269.50px;">14032,2</div>
<div class="dx" style="left:22.20px;top:277.15px;">S</div>
<div class="dx" style="left:31.40px;top:277.15px;">1301</div>
<div class="dx" style="left:58.90px;top:277.15px;">G0MVP</div>
<div class="dx" style="right:501.30px;top:277.15px;">14060,0</div>
<div class="dx" style="left:22.20px;top:284.80px;">S</div>
<div class="dx" style="left:31.40px;top:284.80px;">1301</div>
<div class="dx" style="left:58.90px;top:284.80px;">DL1REM</div>
<div class="dx" style="right:501.30px;top:284.80px;">21018,6</div>
<div class="dx" style="left:22.20px;top:292.44px;">S</div>
<div class="dx" style="left:31.40px;top:292.44px;">1301</div>
<div class="dx" style="left:58.90px;top:292.44px;">YV5NWG</div>
<div class="dx" style="right:501.30px;top:292.44px;">21105,0</div>
<div class="dx" style="left:22.20px;top:300.09px;">S</div>
<div class="dx" style="left:31.40px;top:300.09px;">1301</div>
<div class="dx" style="left:58.90px;top:300.09px;">RC4W</div>
<div class="dx" style="right:501.30px;top:300.09px;">14017,2</div>
<div class="dx" style="left:22.20px;top:307.74px;">S</div>
<div class="dx" style="left:31.40px;top:307.74px;">1301</div>
<div class="dx" style="left:58.90px;top:307.74px;">RM25RP</div>
<div class="dx" style="right:501.30px;top:307.74px;">7010,3</div>
<div class="dx" style="left:22.20px;top:315.38px;">S</div>
<div class="dx" style="left:31.40px;top:315.38px;">1302</div>
<div class="dx" style="left:58.90px;top:315.38px;">K0SF</div>
<div class="dx" style="right:501.30px;top:315.38px;">7049,5</div>
<div class="dx" style="left:22.20px;top:323.03px;">S</div>
<div class="dx" style="left:31.40px;top:323.03px;">1302</div>
<div class="dx" style="left:58.90px;top:323.03px;">RA9LP</div>
<div class="dx" style="right:501.30px;top:323.03px;">14016,9</div>
<div class="dxp" style="left:31.40px;top:330.68px;">1302</div>
<div class="dxp" style="left:58.90px;top:330.68px;">FT4JA</div>
<div class="dxp" style="right:501.30px;top:330.68px;">28097,0</div>
<div class="dxp" style="left:155.50px;top:331.28px;">*</div>
<div class="dx" style="left:22.20px;top:338.32px;">S</div>
<div class="dx" style="left:31.40px;top:338.32px;">1302</div>
<div class="dx" style="left:58.90px;top:338.32px;">DL9ZOG/P</div>
<div class="dx" style="right:501.30px;top:338.32px;">7032,5</div>
<div class="dx" style="left:22.20px;top:345.97px;">S</div>
<div class="dx" style="left:31.40px;top:345.97px;">1302</div>
<div class="dx" style="left:58.90px;top:345.97px;">OK0EV</div>
<div class="dx" style="right:501.30px;top:345.97px;">1854,0</div>
<div class="dx" style="left:22.20px;top:353.62px;">S</div>
<div class="dx" style="left:31.40px;top:353.62px;">1302</div>
<div class="dx" style="left:58.90px;top:353.62px;">RN9W</div>
<div class="dx" style="right:501.30px;top:353.62px;">14033,0</div>
<div class="dx" style="left:22.20px;top:361.27px;">S</div>
<div class="dx" style="left:31.40px;top:361.27px;">1302</div>
<div class="dx" style="left:58.90px;top:361.27px;">EW1IP</div>
<div class="dx" style="right:501.30px;top:361.27px;">14019,5</div>
<div class="dx" style="left:22.20px;top:368.91px;">S</div>
<div class="dx" style="left:31.40px;top:368.91px;">1302</div>
<div class="dx" style="left:58.90px;top:368.91px;">HA9T</div>
<div class="dx" style="right:501.30px;top:368.91px;">21016,0</div>
<div class="dx" style="left:22.20px;top:376.56px;">S</div>
<div class="dx" style="left:31.40px;top:376.56px;">1302</div>
<div class="dx" style="left:58.90px;top:376.56px;">LZ2UW</div>
<div class="dx" style="right:501.30px;top:376.56px;">21010,7</div>
<div class="dx" style="left:22.20px;top:384.21px;">S</div>
<div class="dx" style="left:31.40px;top:384.21px;">1302</div>
<div class="dx" style="left:58.90px;top:384.21px;">WA5KMA</div>
<div class="dx" style="right:501.30px;top:384.21px;">14053,6</div>
<div class="dx" style="left:22.20px;top:391.85px;">S</div>
<div class="dx" style="left:31.40px;top:391.85px;">1302</div>
<div class="dx" style="left:58.90px;top:391.85px;">DL1RNN</div>
<div class="dx" style="right:501.30px;top:391.85px;">14018,7</div>
<div class="dx" style="left:22.20px;top:399.50px;">S</div>
<div class="dx" style="left:31.40px;top:399.50px;">1302</div>
<div class="dx" style="left:58.90px;top:399.50px;">RA9LAN</div>
<div class="dx" style="right:501.30px;top:399.50px;">14016,9</div>
<div class="dx" style="left:22.20px;top:407.15px;">S</div>
<div class="dx" style="left:31.40px;top:407.15px;">1302</div>
<div class="dx" style="left:58.90px;top:407.15px;">AA3B</div>
<div class="dx" style="right:501.30px;top:407.15px;">21047,6</div>
<div class="dx" style="left:22.20px;top:414.79px;">S</div>
<div class="dx" style="left:31.40px;top:414.79px;">1302</div>
<div class="dx" style="left:58.90px;top:414.79px;">R3QA</div>
<div class="dx" style="right:501.30px;top:414.79px;">14027,0</div>
<div class="dxp" style="left:31.40px;top:422.44px;">1302</div>
<div class="dxp" style="left:58.90px;top:422.44px;">FT4JA</div>
<div class="dxp" style="right:501.30px;top:422.44px;">21100,0</div>
<div class="dxp" style="left:155.50px;top:423.04px;">*</div>
<div class="dx" style="left:31.40px;top:430.09px;">1302</div>
<div class="dx" style="left:58.90px;top:430.09px;">R102PWO</div>
<div class="dx" style="right:501.30px;top:430.09px;">14001,0</div>
<div class="dx" style="left:22.20px;top:437.74px;">S</div>
<div class="dx" style="left:31.40px;top:437.74px;">1302</div>
<div class="dx" style="left:58.90px;top:437.74px;">UA3QGT</div>
<div class="dx" style="right:501.30px;top:437.74px;">14035,6</div>
<div class="dx" style="left:22.20px;top:445.38px;">S</div>
<div class="dx" style="left:31.40px;top:445.38px;">1302</div>
<div class="dx" style="left:58.90px;top:445.38px;">PA7LV</div>
<div class="dx" style="right:501.30px;top:445.38px;">14043,8</div>
<div class="dx" style="left:31.40px;top:453.03px;">1302</div>
<div class="dx" style="left:58.90px;top:453.03px;">K1KS</div>
<div class="dx" style="right:501.30px;top:453.03px;">7084,2</div>
<div class="dx" style="left:22.20px;top:460.68px;">S</div>
<div class="dx" style="left:31.40px;top:460.68px;">1302</div>
<div class="dx" style="left:58.90px;top:460.68px;">F5OZC</div>
<div class="dx" style="right:501.30px;top:460.68px;">21021,9</div>
<div class="dx" style="left:22.20px;top:468.32px;">S</div>
<div class="dx" style="left:31.40px;top:468.32px;">1302</div>
<div class="dx" style="left:58.90px;top:468.32px;">RA4I</div>
<div class="dx" style="right:501.30px;top:468.32px;">14042,9</div>
<div class="dx" style="left:22.20px;top:475.97px;">S</div>
<div class="dx" style="left:31.40px;top:475.97px;">1302</div>
<div class="dx" style="left:58.90px;top:475.97px;">RK5SGC</div>
<div class="dx" style="right:501.30px;top:475.97px;">14038,0</div>
<div class="dx" style="left:13.00px;top:499.26px;color:#d8d8d8;">Band</div>
<div class="dx" style="left:37.80px;top:499.06px;color:#f4f4ff;">ALL</div>
<div class="dx" style="left:94.00px;top:499.06px;color:#f4f4ff;">ALL</div>
<div class="dx" style="left:142.00px;top:499.76px;color:#d8d8d8;">Mult</div>
<div class="sb" style="left:181.00px;top:31.07px;font-size:6.2px;letter-spacing:-0.38px;">Quick QSY</div>
<div class="qb" style="left:168.70px;width:60px;text-align:center;top:43.69px;">1835 CW</div>
<div class="qb" style="left:209.55px;width:60px;text-align:center;top:43.69px;">1845 LSB</div>
<div class="qb" style="left:250.15px;width:60px;text-align:center;top:43.69px;">1845 RTTY</div>
<div class="qb" style="left:168.70px;width:60px;text-align:center;top:58.29px;">3501 CW</div>
<div class="qb" style="left:209.55px;width:60px;text-align:center;top:58.29px;">3750 LSB</div>
<div class="qb" style="left:250.15px;width:60px;text-align:center;top:58.29px;">3580 RTTY</div>
<div class="qb" style="left:168.70px;width:60px;text-align:center;top:72.89px;">7020 CW</div>
<div class="qb" style="left:209.55px;width:60px;text-align:center;top:72.89px;">7070 LSB</div>
<div class="qb" style="left:250.15px;width:60px;text-align:center;top:72.89px;">7035 RTTY</div>
<div class="qb" style="left:168.70px;width:60px;text-align:center;top:87.39px;">14020 CW</div>
<div class="qb" style="left:209.55px;width:60px;text-align:center;top:87.39px;">14220 USB</div>
<div class="qb" style="left:250.15px;width:60px;text-align:center;top:87.39px;">14085 RTTY</div>
<div class="qb" style="left:168.70px;width:60px;text-align:center;top:102.09px;">21020 CW</div>
<div class="qb" style="left:209.55px;width:60px;text-align:center;top:102.09px;">21300 USB</div>
<div class="qb" style="left:250.15px;width:60px;text-align:center;top:102.09px;">21085 RTTY</div>
<div class="sb" style="left:181.00px;top:126.96px;font-size:6.0px;">Spot Alert</div>
<div class="sp" style="left:183.00px;top:137.91px;">14021,4 RM1T        09dB 1302</div>
<div class="sp" style="left:183.00px;top:146.06px;">14011,5 UN7EG       06dB 1302</div>
<div class="sp" style="left:183.00px;top:154.21px;">14038,0 RK5SGC      32dB 1302</div>
<div class="sp" style="left:183.00px;top:162.36px;">14042,9 RA4I        04dB 1302</div>
<div class="sp" style="left:183.00px;top:170.51px;">21017,4 RT5G        29dB 1302</div>
<div class="sp" style="left:183.00px;top:178.67px;">21021,9 F5OZC       06dB 1302</div>
<div class="sp" style="left:183.00px;top:186.82px;"> 7084,2 K1KS             1302</div>
<div class="sp" style="left:183.00px;top:194.97px;">14043,8 PA7LV       17dB 1302</div>
<div class="sp" style="left:183.00px;top:203.12px;">14035,6 UA3QGT      02dB 1302</div>
<div class="sp" style="left:183.00px;top:211.27px;">14001,0 R102PWO          1302</div>
<div class="sp" style="left:183.00px;top:219.43px;"> 7028,6 LY2NK       16dB 1302</div>
<div class="sp" style="left:183.00px;top:227.58px;">21100,0 FT4JA            1302</div>
<div class="sp" style="left:183.00px;top:235.73px;">14027,0 R3QA        11dB 1302</div>
<div class="sp" style="left:183.00px;top:243.88px;">21047,6 AA3B        10dB 1302</div>
<div class="sp" style="left:183.00px;top:252.03px;">14016,9 RA9LAN      06dB 1302</div>
<div class="sp" style="left:183.00px;top:260.19px;">14018,7 DL1RNN      06dB 1302</div>
<div class="sp" style="left:183.00px;top:268.34px;">14053,6 WA5KMA      36dB 1302</div>
<div class="sp" style="left:183.00px;top:276.49px;">21010,7 LZ2UW       15dB 1302</div>
<div class="sp" style="left:183.00px;top:284.64px;">21016,0 HA9T        18dB 1302</div>
<div class="sp" style="left:183.00px;top:292.79px;">14019,5 EW1IP       11dB 1302</div>
<div class="sp" style="left:183.00px;top:300.95px;">14035,7 UA3QGT           1302</div>
<div class="sp" style="left:183.00px;top:309.10px;">14033,0 RN9W        11dB 1302</div>
<div class="cn" style="right:325.10px;top:155.69px;">0</div>
<div class="cn" style="left:598.80px;top:155.69px;">0</div>
<div class="cn" style="right:325.10px;top:139.90px;">50</div>
<div class="cn" style="left:598.80px;top:139.90px;">50</div>
<div class="cn" style="right:325.10px;top:124.11px;">100</div>
<div class="cn" style="left:598.80px;top:124.11px;">100</div>
<div class="cn" style="right:325.10px;top:108.32px;">150</div>
<div class="cn" style="left:598.80px;top:108.32px;">150</div>
<div class="cn" style="right:325.10px;top:92.53px;">200</div>
<div class="cn" style="left:598.80px;top:92.53px;">200</div>
<div class="cn" style="right:325.10px;top:76.74px;">250</div>
<div class="cn" style="left:598.80px;top:76.74px;">250</div>
<div class="cn" style="right:325.10px;top:60.95px;">300</div>
<div class="cn" style="left:598.80px;top:60.95px;">300</div>
<div class="cn" style="left:325.00px;width:20px;text-align:center;top:162.99px;">00</div>
<div class="cn" style="left:335.88px;width:20px;text-align:center;top:162.99px;">02</div>
<div class="cn" style="left:346.76px;width:20px;text-align:center;top:162.99px;">04</div>
<div class="cn" style="left:357.64px;width:20px;text-align:center;top:162.99px;">06</div>
<div class="cn" style="left:368.52px;width:20px;text-align:center;top:162.99px;">08</div>
<div class="cn" style="left:379.40px;width:20px;text-align:center;top:162.99px;">10</div>
<div class="cn" style="left:390.28px;width:20px;text-align:center;top:162.99px;">12</div>
<div class="cn" style="left:401.16px;width:20px;text-align:center;top:162.99px;">14</div>
<div class="cn" style="left:412.04px;width:20px;text-align:center;top:162.99px;">16</div>
<div class="cn" style="left:422.92px;width:20px;text-align:center;top:162.99px;">18</div>
<div class="cn" style="left:433.80px;width:20px;text-align:center;top:162.99px;">20</div>
<div class="cn" style="left:444.68px;width:20px;text-align:center;top:162.99px;">22</div>
<div class="cn" style="left:455.56px;width:20px;text-align:center;top:162.99px;">00</div>
<div class="cn" style="left:466.44px;width:20px;text-align:center;top:162.99px;">02</div>
<div class="cn" style="left:477.32px;width:20px;text-align:center;top:162.99px;">04</div>
<div class="cn" style="left:488.20px;width:20px;text-align:center;top:162.99px;">06</div>
<div class="cn" style="left:499.08px;width:20px;text-align:center;top:162.99px;">08</div>
<div class="cn" style="left:509.96px;width:20px;text-align:center;top:162.99px;">10</div>
<div class="cn" style="left:520.84px;width:20px;text-align:center;top:162.99px;">12</div>
<div class="cn" style="left:531.72px;width:20px;text-align:center;top:162.99px;">14</div>
<div class="cn" style="left:542.60px;width:20px;text-align:center;top:162.99px;">16</div>
<div class="cn" style="left:553.48px;width:20px;text-align:center;top:162.99px;">18</div>
<div class="cn" style="left:564.36px;width:20px;text-align:center;top:162.99px;">20</div>
<div class="cn" style="left:575.24px;width:20px;text-align:center;top:162.99px;">22</div>
<div class="cn" style="left:630.30px;top:85.59px;">160</div>
<div class="cn" style="left:630.30px;top:96.09px;">80</div>
<div class="cn" style="left:630.30px;top:106.59px;">40</div>
<div class="cn" style="left:630.30px;top:117.09px;">20</div>
<div class="cn" style="left:630.30px;top:127.59px;">15</div>
<div class="cn" style="left:630.30px;top:138.09px;">10</div>
<div class="ch" style="left:428.50px;width:100px;text-align:center;top:36.90px;">IR4M</div>
<div class="ch" style="left:378.00px;width:200px;text-align:center;top:44.90px;">QSO per Banda/Ora (doppi esclusi)</div>
<div class="t8" style="left:313.00px;top:188.44px;color:#f4f4f4;">Velocità CW:  30</div>
<div class="sb" style="left:310.60px;top:218.35px;font-size:5.8px;">Rotori</div>
<div class="tb" style="left:318.00px;top:228.96px;">Rotore</div>
<div class="tb" style="left:373.20px;top:228.96px;">HDG</div>
<div class="tw" style="left:318.20px;top:239.96px;">STACK_2040</div>
<div class="tw" style="left:373.20px;top:239.96px;">315</div>
<div class="tw" style="left:318.20px;top:249.96px;">TRIBANDA</div>
<div class="tw" style="left:373.20px;top:249.96px;">045</div>
<div class="t8" style="left:315.40px;top:263.61px;color:#0c4a0c;">Cambi Banda</div>
<div class="t8" style="left:319.60px;top:273.81px;color:#000080;">Runner</div>
<div class="t8" style="left:360.50px;top:273.81px;color:#000080;">Mult</div>
<div class="t8" style="left:311.70px;width:40px;text-align:center;top:287.31px;color:#101010;">40m</div>
<div class="t8" style="left:311.70px;width:40px;text-align:center;top:302.31px;color:#0a3a0a;">Qsy OK</div>
<div class="t8" style="left:348.10px;width:40px;text-align:center;top:287.31px;color:#101010;">160m</div>
<div class="t8" style="left:348.10px;width:40px;text-align:center;top:302.31px;color:#0a3a0a;">Qsy OK</div>
<div class="mn" style="left:405.00px;top:189.68px;font-size:6.4px;color:#454a55;transform:scaleX(0.86);transform-origin:0 50%;">STACK_2040</div>
<div class="mn" style="left:438.75px;width:30px;text-align:center;top:212.99px;font-size:4.8px;color:#f0f0ff;letter-spacing:-0.1px;">0</div>
<div class="mn" style="left:453.90px;width:30px;text-align:center;top:217.05px;font-size:4.8px;color:#f0f0ff;letter-spacing:-0.1px;">30</div>
<div class="mn" style="left:464.99px;width:30px;text-align:center;top:228.14px;font-size:4.8px;color:#f0f0ff;letter-spacing:-0.1px;">60</div>
<div class="mn" style="left:469.05px;width:30px;text-align:center;top:243.29px;font-size:4.8px;color:#f0f0ff;letter-spacing:-0.1px;">90</div>
<div class="mn" style="left:464.99px;width:30px;text-align:center;top:258.44px;font-size:4.8px;color:#f0f0ff;letter-spacing:-0.1px;">120</div>
<div class="mn" style="left:453.90px;width:30px;text-align:center;top:269.53px;font-size:4.8px;color:#f0f0ff;letter-spacing:-0.1px;">150</div>
<div class="mn" style="left:438.75px;width:30px;text-align:center;top:273.59px;font-size:4.8px;color:#f0f0ff;letter-spacing:-0.1px;">180</div>
<div class="mn" style="left:423.60px;width:30px;text-align:center;top:269.53px;font-size:4.8px;color:#f0f0ff;letter-spacing:-0.1px;">210</div>
<div class="mn" style="left:412.51px;width:30px;text-align:center;top:258.44px;font-size:4.8px;color:#f0f0ff;letter-spacing:-0.1px;">240</div>
<div class="mn" style="left:408.45px;width:30px;text-align:center;top:243.29px;font-size:4.8px;color:#f0f0ff;letter-spacing:-0.1px;">270</div>
<div class="mn" style="left:412.51px;width:30px;text-align:center;top:228.14px;font-size:4.8px;color:#f0f0ff;letter-spacing:-0.1px;">300</div>
<div class="mn" style="left:423.60px;width:30px;text-align:center;top:217.05px;font-size:4.8px;color:#f0f0ff;letter-spacing:-0.1px;">330</div>
<div class="scp" style="left:434.40px;width:40px;text-align:center;top:259.34px;font-size:9px;color:#f0e000;letter-spacing:0;">315</div>
<div class="sb" style="left:520.30px;top:189.47px;">Rates [Tutto il Log]</div>
<div class="tr" style="left:532.20px;top:199.56px;">Last</div>
<div class="tr" style="left:568.30px;top:199.56px;">Qso/h</div>
<div class="tr" style="left:605.20px;top:199.56px;">Pts/h</div>
<div class="tb" style="right:101.20px;top:210.96px;">10</div>
<div class="tb" style="right:60.00px;top:210.96px;">74,8</div>
<div class="tb" style="right:23.40px;top:210.96px;">172,1</div>
<div class="tb" style="right:101.20px;top:221.16px;">50</div>
<div class="tb" style="right:60.00px;top:221.16px;">75,0</div>
<div class="tb" style="right:23.40px;top:221.16px;">184,4</div>
<div class="tb" style="right:101.20px;top:231.16px;">100</div>
<div class="tb" style="right:60.00px;top:231.16px;">82,2</div>
<div class="tb" style="right:23.40px;top:231.16px;">196,4</div>
<div class="tr" style="left:534.00px;top:246.76px;">1 Moltiplicatore Vale</div>
<div class="tb" style="left:529.00px;top:257.66px;">6,5 Qso o 4,7 min (3pt)</div>
<div class="tb" style="left:520.20px;top:272.96px;">Pt/QSO: 2871 Pt/Mult: 18672</div>
<div class="tw" style="left:518.60px;width:128px;text-align:center;top:287.26px;">Operatore: IR4M</div>
<div class="scp" style="left:453.20px;top:303.83px;color:#fff;font-size:7.2px;letter-spacing:-0.15px;">Super Check Partial (Log + master)</div>
<div class="scp" style="left:452.00px;top:313.02px;color:#d01818;">WA7LNW</div>
<div class="scp" style="left:452.00px;top:321.94px;color:#d01818;">WA7NB</div>
<div class="scp" style="left:452.00px;top:330.86px;color:#d01818;">WA7G</div>
<div class="scp" style="left:452.00px;top:339.78px;color:#189018;">WA7DAU</div>
<div class="scp" style="left:452.00px;top:348.70px;color:#189018;">WA7PRC</div>
<div class="scp" style="left:452.00px;top:357.62px;">WA7AA</div>
<div class="scp" style="left:452.00px;top:366.54px;">WA7AJ</div>
<div class="scp" style="left:452.00px;top:375.46px;">WA7AMJ</div>
<div class="scp" style="left:452.00px;top:384.38px;">WA7AR</div>
<div class="scp" style="left:452.00px;top:393.30px;">WA7BME</div>
<div class="scp" style="left:502.50px;top:313.02px;">WA7BNG</div>
<div class="scp" style="left:502.50px;top:321.94px;">WA7BNM</div>
<div class="scp" style="left:502.50px;top:330.86px;">WA7BZI</div>
<div class="scp" style="left:502.50px;top:339.78px;">WA7CC</div>
<div class="scp" style="left:502.50px;top:348.70px;">WA7DCG</div>
<div class="scp" style="left:502.50px;top:357.62px;">WA7DHQ</div>
<div class="scp" style="left:502.50px;top:366.54px;">WA7DIA</div>
<div class="scp" style="left:502.50px;top:375.46px;">WA7DUH</div>
<div class="scp" style="left:502.50px;top:384.38px;">WA7FTP</div>
<div class="scp" style="left:502.50px;top:393.30px;">WA7FUS</div>
<div class="scp" style="left:553.00px;top:313.02px;">WA7GCS</div>
<div class="scp" style="left:553.00px;top:321.94px;">WA7GVT</div>
<div class="scp" style="left:553.00px;top:330.86px;">WA7HJV</div>
<div class="scp" style="left:553.00px;top:339.78px;">WA7HJV/9</div>
<div class="scp" style="left:553.00px;top:348.70px;">WA7HQD</div>
<div class="scp" style="left:553.00px;top:357.62px;">WA7HR</div>
<div class="scp" style="left:553.00px;top:366.54px;">WA7IGV</div>
<div class="scp" style="left:553.00px;top:375.46px;">WA7IIR</div>
<div class="scp" style="left:553.00px;top:384.38px;">WA7IPM</div>
<div class="scp" style="left:553.00px;top:393.30px;">WA7IR</div>
<div class="scp" style="left:603.50px;top:313.02px;">WA7ITZ</div>
<div class="scp" style="left:603.50px;top:321.94px;">WA7JAW</div>
<div class="scp" style="left:603.50px;top:330.86px;">WA7JGO</div>
<div class="scp" style="left:603.50px;top:339.78px;">WA7JHQ</div>
<div class="scp" style="left:603.50px;top:348.70px;">WA7JTM</div>
<div class="scp" style="left:603.50px;top:357.62px;">WA7JUJ</div>
<div class="scp" style="left:603.50px;top:366.54px;">WA7KSJ</div>
<div class="scp" style="left:603.50px;top:375.46px;">WA7LAW</div>
<div class="scp" style="left:603.50px;top:384.38px;">WA7LT</div>
<div class="scp" style="left:603.50px;top:393.30px;">WA7MLH</div>
<div class="sb" style="left:446.50px;top:411.77px;">Sommario (Alt-S)</div>
<div class="tb" style="left:449.40px;top:422.36px;">BANDA   QSO  CTY  ZON DUP  PUNTI MEDIA</div>
<div class="tb" style="left:449.40px;top:431.96px;">  160   133   74   17   0    219  1,65</div>
<div class="tb" style="left:449.40px;top:442.26px;">   80   646  110   33   5   1202  1,86</div>
<div class="tb" style="left:449.40px;top:452.46px;">   40  2642  152   40  90   5976  2,26</div>
<div class="tb" style="left:449.40px;top:462.96px;">   20  1883  144   40  41   3720  1,98</div>
<div class="tb" style="left:449.40px;top:473.06px;">   15  1631  150   38  27   3918  2,40</div>
<div class="tb" style="left:449.40px;top:483.36px;">   10   308  125   34   2    763  2,48</div>
<div class="tb" style="left:449.40px;top:493.26px;">  TOT  7243  755  202 165  15798  2,18</div>
<div class="tr" style="left:497.50px;top:504.16px;">Score: 15.118.686</div>
<div class="tw" style="left:243.20px;width:62px;text-align:center;top:332.06px;">10-APR-2016</div>
<div class="tw" style="left:309.20px;width:58px;text-align:center;top:332.06px;">13:02:32 z</div>
<div class="tk" style="left:188.90px;top:348.81px;">7421</div>
<div class="tk" style="left:221.00px;top:348.81px;">40</div>
<div class="tk" style="left:238.50px;top:348.81px;">2351</div>
<div class="tk" style="left:259.90px;top:348.81px;">VO2AC</div>
<div class="tk" style="left:338.50px;top:348.81px;">599</div>
<div class="tk" style="left:358.50px;top:348.81px;">2</div>
<div class="tk" style="left:188.90px;top:358.73px;">7422</div>
<div class="tk" style="left:221.00px;top:358.73px;">40</div>
<div class="tk" style="left:238.50px;top:358.73px;">2351</div>
<div class="tk" style="left:259.90px;top:358.73px;">VE2ZT</div>
<div class="tk" style="left:338.50px;top:358.73px;">599</div>
<div class="tk" style="left:358.50px;top:358.73px;">5</div>
<div class="tk" style="left:391.00px;top:358.73px;">-DUPE-</div>
<div class="tk" style="left:188.90px;top:368.65px;">7423</div>
<div class="tk" style="left:221.00px;top:368.65px;">40</div>
<div class="tk" style="left:238.50px;top:368.65px;">2352</div>
<div class="tk" style="left:259.90px;top:368.65px;">LA8OSA</div>
<div class="tk" style="left:338.50px;top:368.65px;">599</div>
<div class="tk" style="left:358.50px;top:368.65px;">14</div>
<div class="tk" style="left:188.90px;top:378.57px;">7424</div>
<div class="tk" style="left:221.00px;top:378.57px;">40</div>
<div class="tk" style="left:238.50px;top:378.57px;">2353</div>
<div class="tk" style="left:259.90px;top:378.57px;">K1XS</div>
<div class="tk" style="left:338.50px;top:378.57px;">599</div>
<div class="tk" style="left:358.50px;top:378.57px;">5</div>
<div class="tk" style="left:188.90px;top:388.49px;">7425</div>
<div class="tk" style="left:221.00px;top:388.49px;">40</div>
<div class="tk" style="left:238.50px;top:388.49px;">2354</div>
<div class="tk" style="left:259.90px;top:388.49px;">AK2U</div>
<div class="tk" style="left:338.50px;top:388.49px;">599</div>
<div class="tk" style="left:358.50px;top:388.49px;">5</div>
<div class="tk" style="left:188.90px;top:398.41px;">7426</div>
<div class="tk" style="left:221.00px;top:398.41px;">40</div>
<div class="tk" style="left:238.50px;top:398.41px;">2354</div>
<div class="tk" style="left:259.90px;top:398.41px;">W1YM</div>
<div class="tk" style="left:338.50px;top:398.41px;">599</div>
<div class="tk" style="left:358.50px;top:398.41px;">5</div>
<div class="tk" style="left:188.90px;top:408.33px;">7427</div>
<div class="tk" style="left:221.00px;top:408.33px;">40</div>
<div class="tk" style="left:238.50px;top:408.33px;">2355</div>
<div class="tk" style="left:259.90px;top:408.33px;">RV3UP</div>
<div class="tk" style="left:338.50px;top:408.33px;">599</div>
<div class="tk" style="left:358.50px;top:408.33px;">16</div>
<div class="tk" style="left:391.00px;top:408.33px;">-DUPE-</div>
<div class="tk" style="left:188.90px;top:418.25px;">7428</div>
<div class="tk" style="left:221.00px;top:418.25px;">40</div>
<div class="tk" style="left:238.50px;top:418.25px;">2356</div>
<div class="tk" style="left:259.90px;top:418.25px;">WQ3E</div>
<div class="tk" style="left:338.50px;top:418.25px;">599</div>
<div class="tk" style="left:358.50px;top:418.25px;">5</div>
<div class="tk" style="left:188.90px;top:428.17px;">7429</div>
<div class="tk" style="left:221.00px;top:428.17px;">40</div>
<div class="tk" style="left:238.50px;top:428.17px;">2357</div>
<div class="tk" style="left:259.90px;top:428.17px;">N3DRX</div>
<div class="tk" style="left:338.50px;top:428.17px;">599</div>
<div class="tk" style="left:358.50px;top:428.17px;">5</div>
<div class="tk" style="left:188.90px;top:438.09px;">7430</div>
<div class="tk" style="left:221.00px;top:438.09px;">40</div>
<div class="tk" style="left:238.50px;top:438.09px;">2358</div>
<div class="tk" style="left:259.90px;top:438.09px;">N3BB</div>
<div class="tk" style="left:338.50px;top:438.09px;">599</div>
<div class="tk" style="left:358.50px;top:438.09px;">4</div>
<div class="tk" style="left:188.90px;top:448.01px;">7431</div>
<div class="tk" style="left:221.00px;top:448.01px;">40</div>
<div class="tk" style="left:238.50px;top:448.01px;">2358</div>
<div class="tk" style="left:259.90px;top:448.01px;">EI5JC</div>
<div class="tk" style="left:338.50px;top:448.01px;">599</div>
<div class="tk" style="left:358.50px;top:448.01px;">14</div>
<div class="tk" style="left:188.90px;top:457.93px;">7432</div>
<div class="tk" style="left:221.00px;top:457.93px;">40</div>
<div class="tk" style="left:238.50px;top:457.93px;">2358</div>
<div class="tk" style="left:259.90px;top:457.93px;">IK4CLF</div>
<div class="tk" style="left:338.50px;top:457.93px;">599</div>
<div class="tk" style="left:358.50px;top:457.93px;">15</div>
<div class="tk" style="left:188.90px;top:467.85px;">7433</div>
<div class="tk" style="left:221.00px;top:467.85px;">40</div>
<div class="tk" style="left:238.50px;top:467.85px;">2359</div>
<div class="tk" style="left:259.90px;top:467.85px;">W0QQG</div>
<div class="tk" style="left:338.50px;top:467.85px;">599</div>
<div class="tk" style="left:358.50px;top:467.85px;">5</div>
<div class="tk" style="left:391.00px;top:467.85px;">-DUPE-</div>
<div class="tk" style="left:188.90px;top:477.77px;">7434</div>
<div class="tk" style="left:221.00px;top:477.77px;">40</div>
<div class="tk" style="left:238.50px;top:477.77px;">2359</div>
<div class="tk" style="left:259.90px;top:477.77px;">NI5M</div>
<div class="tk" style="left:338.50px;top:477.77px;">599</div>
<div class="tk" style="left:358.50px;top:477.77px;">4</div>
<div class="tk" style="left:188.90px;top:487.69px;">7435</div>
<div class="tk" style="left:221.00px;top:487.69px;">20</div>
<div class="tw" style="left:259.90px;top:487.69px;">WA7</div>
<div class="tw" style="left:338.50px;top:487.69px;">599</div>
<svg width="652" height="522" viewBox="0 0 652 522">
<rect x="299.60" y="136.30" width="3.00" height="181.70" fill="#fff" />
</svg>
</div></body></html>
